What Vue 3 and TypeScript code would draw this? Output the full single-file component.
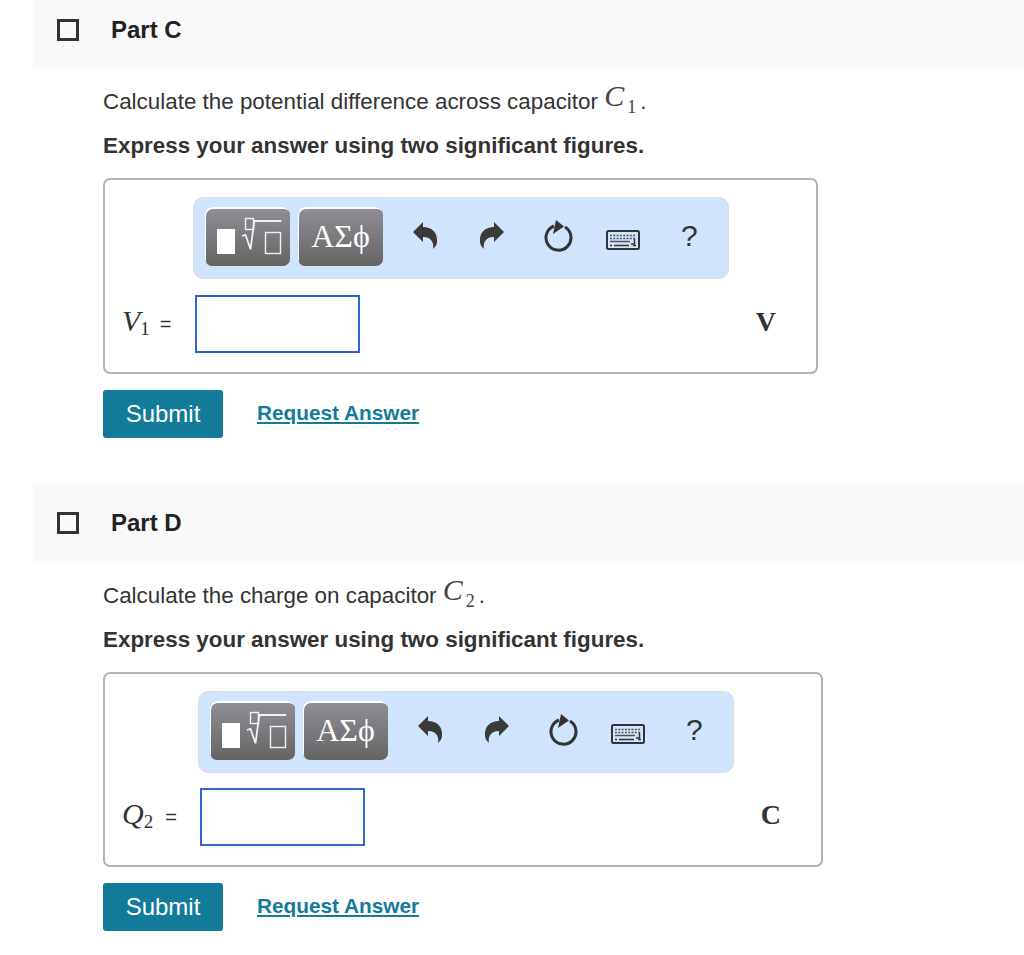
<template>
  <div class="page">
    <section v-for="part in parts" :key="part.name" class="part" :class="`part--${part.id}`">
      <header class="part__head">
        <span class="part__check"></span>
        <h2 class="part__title">Part {{ part.name }}</h2>
      </header>
      <div class="part__body">
        <p class="prompt">
          {{ part.prompt }}
          <span class="math"><i>C</i><sub>{{ part.sub }}</sub></span><span class="dot">.</span>
        </p>
        <p class="hint">Express your answer using two significant figures.</p>
        <div class="panel">
          <div class="toolbar">
            <button class="tool tool--tpl" type="button">
              <svg width="85" height="59" viewBox="0 0 85 59">
                <rect x="12" y="22" width="18" height="25" fill="#fff" />
                <rect x="40.500" y="11.500" width="8" height="11" fill="none" stroke="#f2f2f2" stroke-width="1.400" />
                <path d="M37 29l3.500-1.200 5 14.500 3.800-28.300h27" fill="none" stroke="#f2f2f2" stroke-width="1.800" />
                <rect x="60.500" y="25.500" width="15" height="21" fill="none" stroke="#f2f2f2" stroke-width="1.400" />
              </svg>
            </button>
            <button class="tool tool--sym" type="button">ΑΣϕ</button>
            <svg class="ico ico--undo" width="28" height="32" viewBox="0 0 28 32">
              <path :d="arrow" fill="#3a3a3a" />
            </svg>
            <svg class="ico ico--redo" width="28" height="32" viewBox="0 0 28 32">
              <path :d="arrow" fill="#3a3a3a" transform="matrix(-1 0 0 1 28 0)" />
            </svg>
            <svg class="ico ico--reset" width="30" height="34" viewBox="0 0 30 34">
              <path d="M11 7A12.500 12.500 0 1 0 22 8" fill="none" stroke="#333" stroke-width="3" />
              <path d="M13 1l8 6.500-11 7.500z" fill="#333" />
            </svg>
            <svg class="ico ico--keys" width="34" height="20" viewBox="0 0 34 20">
              <rect x="1" y="1" width="32" height="18" rx="1.500" fill="none" stroke="#333" stroke-width="2" />
              <path d="M4 5.500h26M4 8.500h26" stroke="#555" stroke-width="1.500" stroke-dasharray="2 1.300" />
              <path d="M4 11.500h20" stroke="#555" stroke-width="1.500" />
              <path d="M28.500 9v5H25" fill="none" stroke="#333" stroke-width="1.500" />
              <path d="M8 15.500h15M4 15.500h2M27 15.500h3" stroke="#333" stroke-width="1.600" />
            </svg>
            <span class="help">?</span>
          </div>
          <div class="answer">
            <span class="label"><i class="var">{{ part.symbol }}</i><sub>{{ part.sub }}</sub><span class="eq">=</span></span>
            <input class="field" type="text" />
            <span class="unit">{{ part.unit }}</span>
          </div>
        </div>
        <div class="actions">
          <button class="submit" type="button">Submit</button>
          <a class="request" href="#" @click.prevent>Request Answer</a>
        </div>
      </div>
    </section>
  </div>
</template>

<script setup lang="ts">
interface Part {
  id: string
  name: string
  prompt: string
  symbol: string
  sub: number
  unit: string
}

const parts: Part[] = [
  { id: 'c', name: 'C', prompt: 'Calculate the potential difference across capacitor', symbol: 'V', sub: 1, unit: 'V' },
  { id: 'd', name: 'D', prompt: 'Calculate the charge on capacitor', symbol: 'Q', sub: 2, unit: 'C' }
]

const arrow = 'M2 12L12 2v5c8 0 15 5 14 15 0 3-2 5-4 7 1-4 0-12-10-12v5z'
</script>

<style scoped>
.page {
  width: 1024px;
  height: 955px;
  overflow: hidden;
  padding-left: 33px;
  box-sizing: border-box;
  font-family: "Liberation Sans", Arial, sans-serif;
  color: #333;
}

.part__head {
  display: flex;
  align-items: center;
  height: 69px;
  padding-left: 24px;
  padding-bottom: 9px;
  background: #f9f9f9;
  box-sizing: border-box;
}

.part--d {
  margin-top: 45px;
}

.part--d .part__head {
  height: 80px;
  padding-bottom: 0;
}

.part__check {
  width: 16px;
  height: 16px;
  border: 3px solid #333;
  flex-shrink: 0;
}

.part__title {
  margin: 0 0 0 32px;
  font-size: 24px;
  font-weight: 700;
  color: #222;
}

.part__body {
  padding: 17px 0 0 70px;
}

.prompt {
  margin: 0;
  font-size: 22.400px;
  line-height: 32px;
  height: 32px;
  white-space: nowrap;
}

.math {
  font-family: "Liberation Serif", serif;
  font-size: 30px;
  line-height: 0;
  color: #444;
}

.math i {
  vertical-align: 3px;
  line-height: 0;
}

.math sub {
  font-size: 18px;
  line-height: 0;
  margin-left: 3px;
  vertical-align: -4px;
}

.dot {
  margin-left: 4px;
}

.hint {
  margin: 12px 0 0;
  font-size: 22.400px;
  line-height: 32px;
  font-weight: 700;
}

.panel {
  width: 715px;
  height: 196px;
  box-sizing: border-box;
  margin-top: 16px;
  border: 2px solid #b3b3b3;
  border-radius: 7px;
  padding: 17px 0 0 88px;
}

.part--d .panel {
  width: 720px;
  height: 195px;
  padding-left: 93px;
}

.toolbar {
  display: flex;
  align-items: center;
  width: 536px;
  height: 82px;
  box-sizing: border-box;
  background: #d0e5fd;
  border: 1px solid #dcdcdc;
  border-radius: 10px;
  padding: 0 0 4px 11px;
}

.tool {
  width: 85px;
  height: 59px;
  box-sizing: border-box;
  padding: 0;
  border: 0;
  border-radius: 7px;
  background: linear-gradient(#918f97, #646464);
  box-shadow: inset 1px 2px 0 #fff;
  color: #fff;
  display: flex;
  align-items: center;
  justify-content: center;
}

.tool--sym {
  margin-left: 8px;
  font-family: "Liberation Serif", serif;
  font-size: 32px;
}

.ico {
  flex-shrink: 0;
}

.ico--undo {
  margin-left: 28px;
}

.ico--redo {
  margin-left: 39px;
}

.ico--reset {
  margin-left: 37px;
}

.ico--keys {
  margin: 8px 0 0 33px;
}

.help {
  margin-left: 41px;
  font-size: 30px;
  color: #333;
}

.answer {
  display: flex;
  align-items: center;
  margin: 16px 0 0 -88px;
  width: 713px;
  height: 58px;
}

.part--d .answer {
  margin: 15px 0 0 -93px;
  width: 718px;
}

.label {
  width: 90px;
  padding: 0 0 6px 17px;
  box-sizing: border-box;
  white-space: nowrap;
  font-family: "Liberation Serif", serif;
}

.part--d .label {
  width: 95px;
}

.var {
  font-size: 30px;
}

.label sub {
  font-size: 19px;
  line-height: 0;
}

.eq {
  font-family: "Liberation Sans", sans-serif;
  font-size: 20px;
  margin-left: 10px;
}

.part--d .eq {
  margin-left: 12px;
}

.field {
  width: 165px;
  height: 58px;
  box-sizing: border-box;
  border: 2px solid #2f66c9;
  background: #fff;
  padding: 0;
  outline: none;
}

.unit {
  margin-left: auto;
  margin-right: 42px;
  padding-bottom: 4px;
  font-family: "Liberation Serif", serif;
  font-size: 28px;
  font-weight: 700;
  color: #333;
}

.actions {
  display: flex;
  align-items: center;
  margin-top: 16px;
}

.submit {
  width: 120px;
  height: 48px;
  border: 0;
  border-radius: 3px;
  background: #147a9a;
  color: #fff;
  font-family: "Liberation Sans", Arial, sans-serif;
  font-size: 24px;
}

.request {
  margin-left: 34px;
  padding-bottom: 3px;
  font-size: 20.800px;
  font-weight: 700;
  color: #147a9a;
  text-decoration: underline;
}
</style>
